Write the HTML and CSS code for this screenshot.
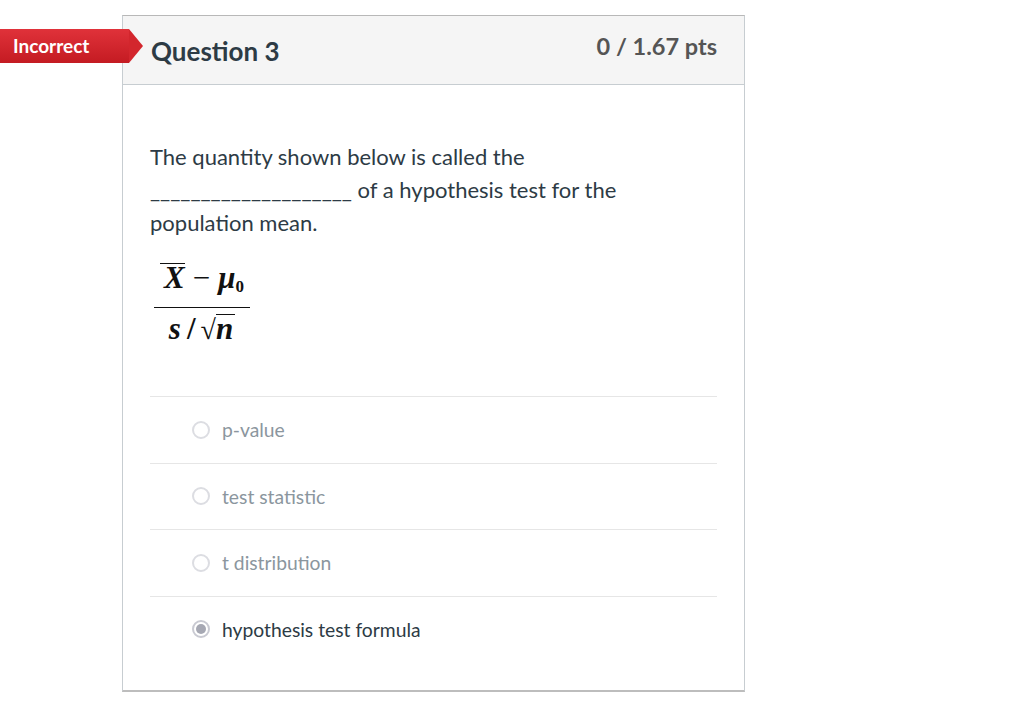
FILE: index.html
```html
<!DOCTYPE html>
<html>
<head>
<meta charset="utf-8">
<link rel="stylesheet" href="styles.css">
</head>
<body>
<div class="page">
  <div class="badge">Incorrect</div>
  <div class="card">
    <div class="card-head">
      <h2 class="q-title">Question 3</h2>
      <div class="pts">0 / 1.67 pts</div>
    </div>
    <div class="card-body">
      <p class="q-text">The quantity shown below is called the<br>____________________ of a hypothesis test for the<br>population mean.</p>
      <div class="formula">
        <div class="frac">
          <div class="num"><span class="xbar">X</span><span class="minus">&minus;</span><span class="mu">μ<sub>0</sub></span></div>
          <div class="den"><span>s</span><span class="slash">/</span><span class="root">√</span><span class="rad">n</span></div>
        </div>
      </div>
      <ul class="answers">
        <li class="answer"><span class="radio"></span><span class="label">p-value</span></li>
        <li class="answer"><span class="radio"></span><span class="label">test statistic</span></li>
        <li class="answer"><span class="radio"></span><span class="label">t distribution</span></li>
        <li class="answer selected"><span class="radio"></span><span class="label">hypothesis test formula</span></li>
      </ul>
    </div>
  </div>
</div>
</body>
</html>
```
FILE: styles.css
```css
* { box-sizing: border-box; }
body {
  margin: 0;
  background: #fff;
  font-family: Lato, "Noto Sans", sans-serif;
  color: #2d3b45;
}
.page {
  position: relative;
  padding: 15px 0 0 122px;
}
.badge {
  position: absolute;
  left: 0;
  top: 29px;
  height: 34px;
  width: 129px;
  background: linear-gradient(#e0323a, #c41b22);
  color: #fff;
  font-weight: 700;
  font-size: 19px;
  line-height: 33px;
  padding-left: 13px;
  z-index: 2;
}
.badge::after {
  content: "";
  position: absolute;
  right: -14px;
  top: 0;
  border-top: 17px solid transparent;
  border-bottom: 17px solid transparent;
  border-left: 14px solid #d3262d;
}
.card {
  width: 623px;
  border: 1px solid #c7cdd1;
  border-top-color: #b8b8b8;
  border-bottom: 2px solid #bdbdbd;
}
.card-head {
  background: #f5f5f5;
  border-bottom: 1px solid #c7cdd1;
  height: 69px;
  display: flex;
  justify-content: space-between;
  padding: 0 27px 0 28px;
}
.q-title {
  margin: 0;
  padding-top: 19px;
  font-size: 26px;
  font-weight: 700;
  line-height: 32px;
  color: #2d3b45;
}
.pts {
  padding-top: 16px;
  font-size: 23.5px;
  font-weight: 700;
  line-height: 28px;
  color: #555;
}
.card-body {
  padding: 55px 27px 28px 27px;
}
.q-text {
  margin: 0;
  font-size: 22px;
  line-height: 33px;
  color: #2d3b45;
}
.formula {
  padding: 22px 0 48px 4px;
}
.frac {
  display: inline-flex;
  flex-direction: column;
  align-items: center;
  font-family: "Liberation Serif", serif;
  font-weight: 700;
  font-style: italic;
  font-size: 31px;
  color: #111;
  width: 96px;
}
.num {
  line-height: 34px;
  padding-bottom: 3px;
  display: flex;
  align-items: baseline;
}
.xbar {
  border-top: 1.5px solid #111;
  line-height: 28px;
  padding-left: 4px;
}
.minus {
  font-style: normal;
  font-weight: 400;
  margin: 0 8px 0 8px;
}
.mu sub {
  font-size: 17px;
  font-style: normal;
  vertical-align: -4px;
}
.den {
  width: 100%;
  border-top: 1.5px solid #111;
  text-align: center;
  line-height: 36px;
  padding-top: 3px;
  display: flex;
  justify-content: center;
  align-items: baseline;
}
.slash { font-style: normal; font-weight: 700; margin: 0 5px 0 6px; }
.root { font-style: normal; font-weight: 400; font-size: 28px; }
.rad { border-top: 1.5px solid #111; line-height: 28px; padding-right: 2px; }
.answers {
  list-style: none;
  margin: 0;
  padding: 0;
}
.answer {
  height: 66.5px;
  border-top: 1.5px solid #e6e6e6;
  display: flex;
  align-items: center;
  padding-left: 42px;
  font-size: 19.3px;
  color: #8b969e;
}
.radio {
  width: 18px;
  height: 18px;
  border-radius: 50%;
  border: 2px solid #dcdde2;
  margin-right: 12px;
  display: flex;
  align-items: center;
  justify-content: center;
}
.answer.selected { color: #2d3b45; }
.answer.selected .radio {
  border-color: #c9cad2;
}
.answer.selected .radio::after {
  content: "";
  width: 10px;
  height: 10px;
  border-radius: 50%;
  background: #a6a8b3;
}
```
